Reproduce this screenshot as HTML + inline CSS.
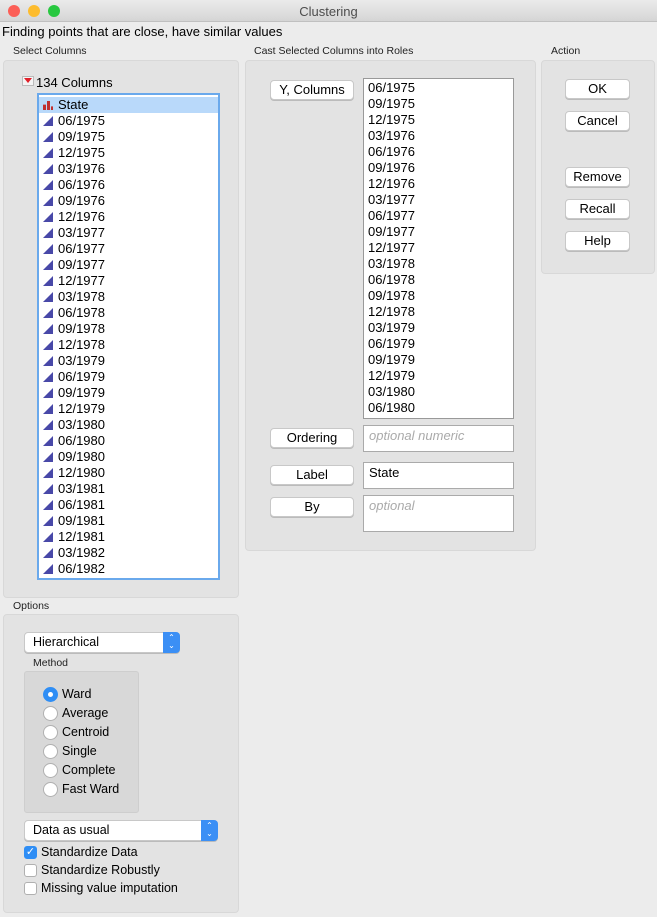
<!DOCTYPE html><html><head><style>
*{margin:0;padding:0;box-sizing:border-box}
body{width:657px;height:917px;background:#ececec;font-family:"Liberation Sans",sans-serif;font-size:13px;color:#000;position:relative;overflow:hidden}
.a{position:absolute}
.lbl{position:absolute;font-size:10.5px;color:#222}
.pan{position:absolute;background:#e3e3e3;border:1px solid #d8d8d8;border-radius:4px}
.btn{position:absolute;background:#fff;border:1px solid #c8c8c8;border-radius:4px;text-align:center;font-size:13px;line-height:18px;box-shadow:0 1px 0 #bbb}
.list{position:absolute;background:#fff;border:1px solid #999}
.row{height:16px;line-height:16px;white-space:nowrap}
.tri{display:inline-block;width:0;height:0;border-left:10px solid transparent;border-bottom:10px solid #4848a8;margin:0 5px 0 4px;vertical-align:-1px}
.rad{position:absolute;left:43px;width:15px;height:15px;border-radius:50%;background:#fff;border:1px solid #b0b0b0}
.rt{position:absolute;left:62px;font-size:12.5px}
.cb{position:absolute;left:24px;width:13px;height:13px;border-radius:3px;background:#fff;border:1px solid #b0b0b0}
.ct{position:absolute;left:41px;font-size:12.5px}
.fld{position:absolute;background:#fff;border:1px solid #aaa;padding:2px 5px;font-size:13px}
</style></head><body>
<div class="a" style="left:0;top:0;width:657px;height:22px;background:linear-gradient(#ebebeb,#d5d5d5);border-bottom:1px solid #c0c0c0"></div>
<div class="a" style="left:8px;top:5px;width:12px;height:12px;border-radius:50%;background:#fc5f57"></div>
<div class="a" style="left:28px;top:5px;width:12px;height:12px;border-radius:50%;background:#fdbc2e"></div>
<div class="a" style="left:48px;top:5px;width:12px;height:12px;border-radius:50%;background:#28c840"></div>
<div class="a" style="left:0;width:657px;top:4px;text-align:center;color:#4d4d4d;font-size:13px">Clustering</div>
<div class="a" style="left:2px;top:24px;font-size:13px">Finding points that are close, have similar values</div>

<div class="lbl" style="left:13px;top:45px">Select Columns</div>
<div class="pan" style="left:3px;top:60px;width:236px;height:538px"></div>
<div class="a" style="left:22px;top:76px;width:12px;height:10px;border:1px solid #bbb;background:#f4f4f4"></div>
<div class="a" style="left:24px;top:78px;border-left:4px solid transparent;border-right:4px solid transparent;border-top:5px solid #e0202a"></div>
<div class="a" style="left:36px;top:75px;font-size:13px">134 Columns</div>
<div class="list" style="left:37px;top:93px;width:183px;height:487px;border:2px solid #6aa9ec;padding-top:2px;overflow:hidden">
<div class="row" style="background:#b9d9fa"><span style="display:inline-block;width:10px;height:9px;margin:0 5px 0 4px;vertical-align:-1px;background:linear-gradient(90deg,#c03030 0 3px,transparent 3px 4px,#c03030 4px 7px,transparent 7px 8px,#c03030 8px);clip-path:polygon(0 40%,30% 40%,30% 0,70% 0,70% 60%,100% 60%,100% 100%,0 100%)"></span>State</div>
<div class="row"><span class="tri"></span>06/1975</div><div class="row"><span class="tri"></span>09/1975</div><div class="row"><span class="tri"></span>12/1975</div><div class="row"><span class="tri"></span>03/1976</div><div class="row"><span class="tri"></span>06/1976</div><div class="row"><span class="tri"></span>09/1976</div><div class="row"><span class="tri"></span>12/1976</div><div class="row"><span class="tri"></span>03/1977</div><div class="row"><span class="tri"></span>06/1977</div><div class="row"><span class="tri"></span>09/1977</div><div class="row"><span class="tri"></span>12/1977</div><div class="row"><span class="tri"></span>03/1978</div><div class="row"><span class="tri"></span>06/1978</div><div class="row"><span class="tri"></span>09/1978</div><div class="row"><span class="tri"></span>12/1978</div><div class="row"><span class="tri"></span>03/1979</div><div class="row"><span class="tri"></span>06/1979</div><div class="row"><span class="tri"></span>09/1979</div><div class="row"><span class="tri"></span>12/1979</div><div class="row"><span class="tri"></span>03/1980</div><div class="row"><span class="tri"></span>06/1980</div><div class="row"><span class="tri"></span>09/1980</div><div class="row"><span class="tri"></span>12/1980</div><div class="row"><span class="tri"></span>03/1981</div><div class="row"><span class="tri"></span>06/1981</div><div class="row"><span class="tri"></span>09/1981</div><div class="row"><span class="tri"></span>12/1981</div><div class="row"><span class="tri"></span>03/1982</div><div class="row"><span class="tri"></span>06/1982</div>
</div>

<div class="lbl" style="left:254px;top:45px">Cast Selected Columns into Roles</div>
<div class="pan" style="left:245px;top:60px;width:291px;height:491px"></div>
<div class="btn" style="left:270px;top:80px;width:84px;height:20px">Y, Columns</div>
<div class="list" style="left:363px;top:78px;width:151px;height:341px;padding:1px 0 0 4px;overflow:hidden">
<div class="row">06/1975</div><div class="row">09/1975</div><div class="row">12/1975</div><div class="row">03/1976</div><div class="row">06/1976</div><div class="row">09/1976</div><div class="row">12/1976</div><div class="row">03/1977</div><div class="row">06/1977</div><div class="row">09/1977</div><div class="row">12/1977</div><div class="row">03/1978</div><div class="row">06/1978</div><div class="row">09/1978</div><div class="row">12/1978</div><div class="row">03/1979</div><div class="row">06/1979</div><div class="row">09/1979</div><div class="row">12/1979</div><div class="row">03/1980</div><div class="row">06/1980</div>
</div>
<div class="btn" style="left:270px;top:428px;width:84px;height:20px">Ordering</div>
<div class="fld" style="left:363px;top:425px;width:151px;height:27px;color:#aaa;font-style:italic">optional numeric</div>
<div class="btn" style="left:270px;top:465px;width:84px;height:20px">Label</div>
<div class="fld" style="left:363px;top:462px;width:151px;height:27px">State</div>
<div class="btn" style="left:270px;top:497px;width:84px;height:20px">By</div>
<div class="fld" style="left:363px;top:495px;width:151px;height:37px;color:#aaa;font-style:italic">optional</div>

<div class="lbl" style="left:551px;top:45px">Action</div>
<div class="pan" style="left:541px;top:60px;width:114px;height:214px"></div>
<div class="btn" style="left:565px;top:79px;width:65px;height:20px">OK</div>
<div class="btn" style="left:565px;top:111px;width:65px;height:20px">Cancel</div>
<div class="btn" style="left:565px;top:167px;width:65px;height:20px">Remove</div>
<div class="btn" style="left:565px;top:199px;width:65px;height:20px">Recall</div>
<div class="btn" style="left:565px;top:231px;width:65px;height:20px">Help</div>

<div class="lbl" style="left:13px;top:600px">Options</div>
<div class="pan" style="left:3px;top:614px;width:236px;height:299px"></div>
<div class="a" style="left:24px;top:632px;width:156px;height:21px;background:#fff;border:1px solid #c8c8c8;border-radius:4px;box-shadow:0 1px 0 #bbb;padding-left:8px;line-height:19px;font-size:12.5px">Hierarchical</div>
<div class="a" style="left:163px;top:632px;width:17px;height:21px;background:#3b8ff5;border-radius:0 4px 4px 0;color:#fff;font-size:8px;line-height:8px;text-align:center;padding-top:2px">⌃<br>⌄</div>
<div class="lbl" style="left:33px;top:657px">Method</div>
<div class="a" style="left:24px;top:671px;width:115px;height:142px;background:#d8d8d8;border:1px solid #cecece;border-radius:3px"></div>
<div class="rad" style="top:687px;background:#2f8ef5;border-color:#2f8ef5"></div><div class="a" style="left:48px;top:692px;width:5px;height:5px;border-radius:50%;background:#fff"></div>
<div class="rt" style="top:687px">Ward</div>
<div class="rad" style="top:706px"></div><div class="rt" style="top:706px">Average</div>
<div class="rad" style="top:725px"></div><div class="rt" style="top:725px">Centroid</div>
<div class="rad" style="top:744px"></div><div class="rt" style="top:744px">Single</div>
<div class="rad" style="top:763px"></div><div class="rt" style="top:763px">Complete</div>
<div class="rad" style="top:782px"></div><div class="rt" style="top:782px">Fast Ward</div>
<div class="a" style="left:24px;top:820px;width:194px;height:21px;background:#fff;border:1px solid #c8c8c8;border-radius:4px;box-shadow:0 1px 0 #bbb;padding-left:8px;line-height:19px;font-size:12.5px">Data as usual</div>
<div class="a" style="left:201px;top:820px;width:17px;height:21px;background:#3b8ff5;border-radius:0 4px 4px 0;color:#fff;font-size:8px;line-height:8px;text-align:center;padding-top:2px">⌃<br>⌄</div>
<div class="cb" style="top:846px;background:#2f8ef5;border-color:#2f8ef5;color:#fff;font-size:11px;line-height:11px;text-align:center">✓</div><div class="ct" style="top:845px">Standardize Data</div>
<div class="cb" style="top:864px"></div><div class="ct" style="top:863px">Standardize Robustly</div>
<div class="cb" style="top:882px"></div><div class="ct" style="top:881px">Missing value imputation</div>
</body></html>
